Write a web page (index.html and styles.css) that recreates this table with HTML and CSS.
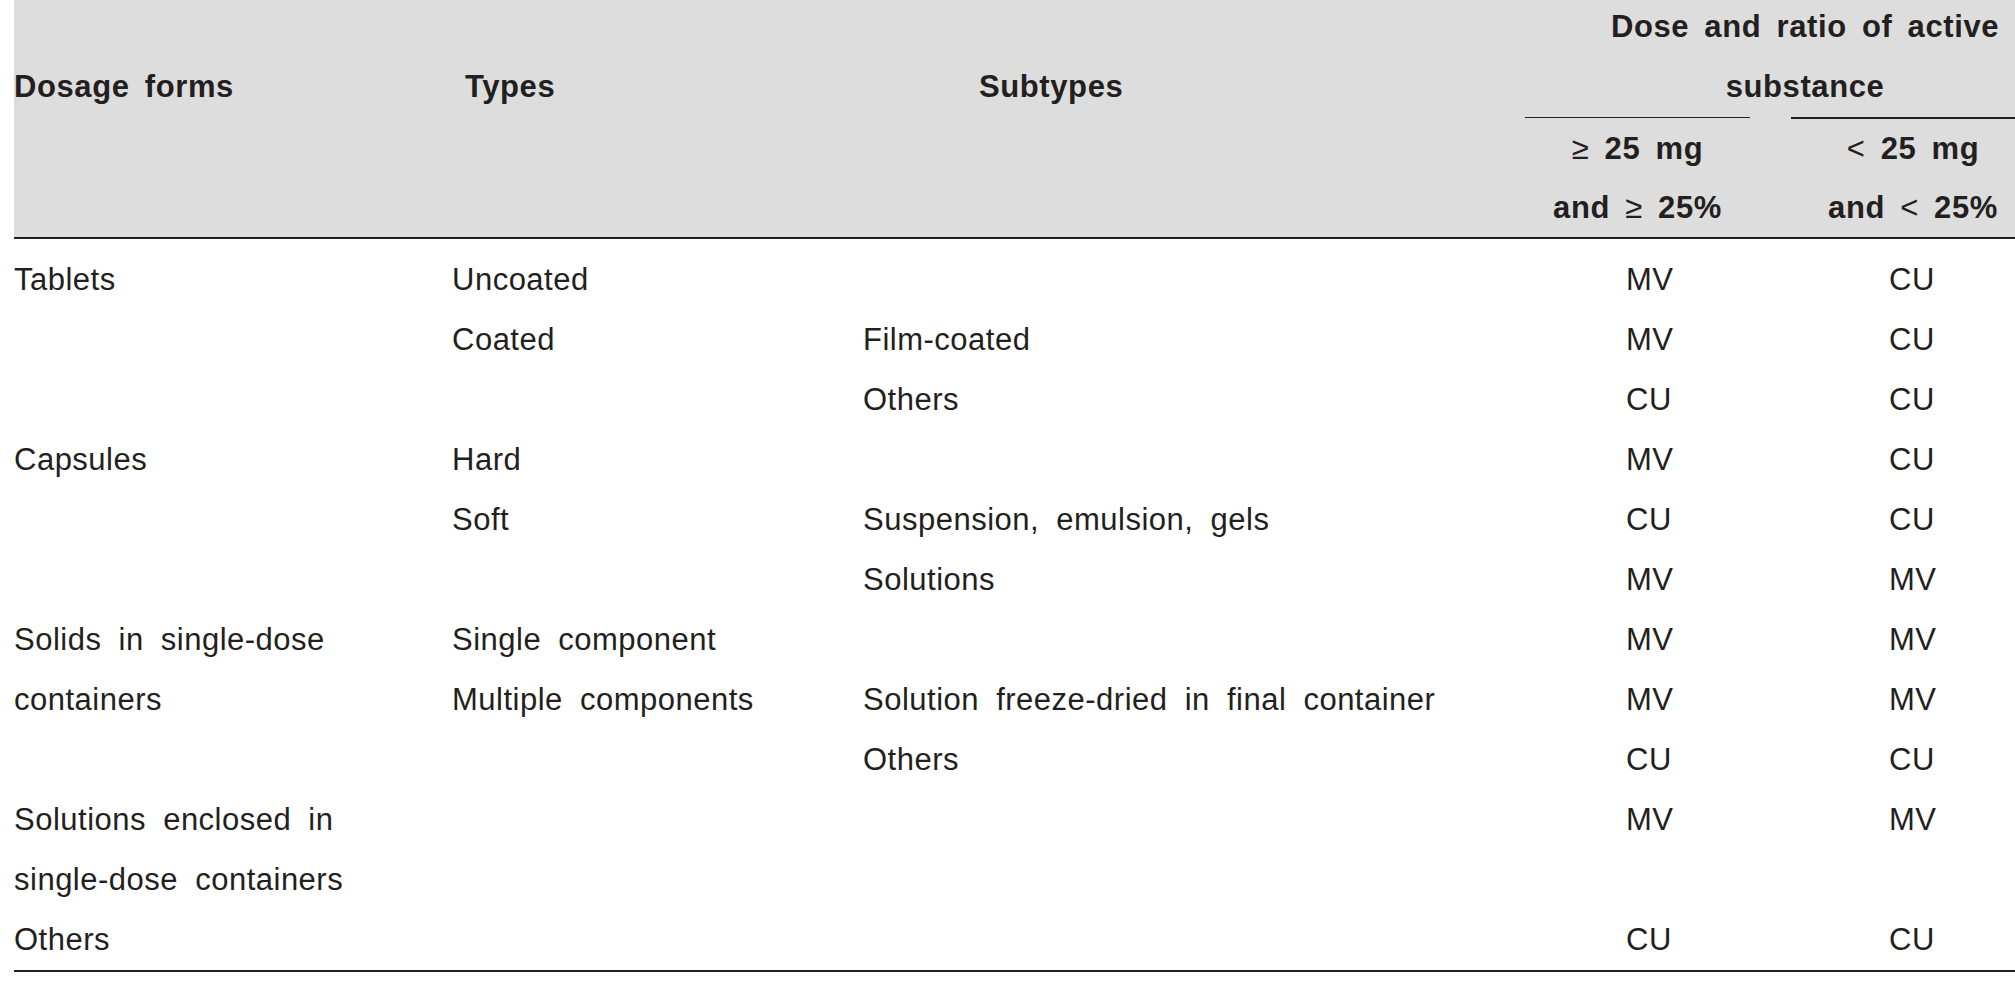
FILE: index.html
```html
<!DOCTYPE html>
<html lang="en">
<head>
<meta charset="utf-8">
<title>Dosage forms</title>
<link rel="stylesheet" href="styles.css">
</head>
<body>
<table class="dose-table">
  <colgroup>
    <col class="c-form">
    <col class="c-type">
    <col class="c-sub">
    <col class="c-hi">
    <col class="c-lo">
  </colgroup>
  <thead>
    <tr class="h1">
      <th colspan="3"></th>
      <th colspan="2" rowspan="2" class="group">Dose and ratio of active<br>substance</th>
    </tr>
    <tr class="h2">
      <th class="h-form">Dosage forms</th>
      <th class="h-type">Types</th>
      <th class="h-sub">Subtypes</th>
    </tr>
    <tr class="h3">
      <th colspan="3"></th>
      <th class="range range-hi"><div class="range-in"><span class="op">&ge;</span> 25 mg<br>and <span class="op">&ge;</span> 25%</div></th>
      <th class="range range-lo"><div class="range-in"><span class="op">&lt;</span> 25 mg<br>and <span class="op">&lt;</span> 25%</div></th>
    </tr>
  </thead>
  <tbody>
    <tr class="first">
      <td>Tablets</td><td>Uncoated</td><td></td><td class="v-hi">MV</td><td class="v-lo">CU</td>
    </tr>
    <tr>
      <td></td><td>Coated</td><td>Film-coated</td><td class="v-hi">MV</td><td class="v-lo">CU</td>
    </tr>
    <tr>
      <td></td><td></td><td>Others</td><td class="v-hi">CU</td><td class="v-lo">CU</td>
    </tr>
    <tr>
      <td>Capsules</td><td>Hard</td><td></td><td class="v-hi">MV</td><td class="v-lo">CU</td>
    </tr>
    <tr>
      <td></td><td>Soft</td><td>Suspension, emulsion, gels</td><td class="v-hi">CU</td><td class="v-lo">CU</td>
    </tr>
    <tr>
      <td></td><td></td><td>Solutions</td><td class="v-hi">MV</td><td class="v-lo">MV</td>
    </tr>
    <tr>
      <td>Solids in single-dose</td><td>Single component</td><td></td><td class="v-hi">MV</td><td class="v-lo">MV</td>
    </tr>
    <tr>
      <td>containers</td><td>Multiple components</td><td>Solution freeze-dried in final container</td><td class="v-hi">MV</td><td class="v-lo">MV</td>
    </tr>
    <tr>
      <td></td><td></td><td>Others</td><td class="v-hi">CU</td><td class="v-lo">CU</td>
    </tr>
    <tr>
      <td>Solutions enclosed in</td><td></td><td></td><td class="v-hi">MV</td><td class="v-lo">MV</td>
    </tr>
    <tr>
      <td>single-dose containers</td><td></td><td></td><td class="v-hi"></td><td class="v-lo"></td>
    </tr>
    <tr class="last">
      <td>Others</td><td></td><td></td><td class="v-hi">CU</td><td class="v-lo">CU</td>
    </tr>
  </tbody>
</table>
</body>
</html>
```

FILE: styles.css
```css
html, body {
  margin: 0;
  padding: 0;
  background: #ffffff;
  overflow: hidden;
}

.dose-table {
  margin: -3px 0 0 14px;
  width: 2001px;
  table-layout: fixed;
  border-collapse: collapse;
  border-spacing: 0;
  font-family: "Liberation Sans", Arial, sans-serif;
  font-size: 31px;
  color: #231f20;
}

.c-form { width: 438px; }
.c-type { width: 411px; }
.c-sub  { width: 662px; }
.c-hi   { width: 245px; }
.c-lo   { width: 245px; }

.dose-table th,
.dose-table td {
  padding: 0;
  text-align: left;
  vertical-align: top;
  line-height: 60px;
  white-space: nowrap;
}

/* header */
.dose-table thead th {
  background: #dddddd;
  font-weight: bold;
  letter-spacing: 0.6px;
  word-spacing: 6px;
}

.dose-table thead tr.h1 th { height: 60px; }
.dose-table thead tr.h2 th { height: 60px; }

.dose-table thead tr.h3 th {
  border-bottom: 2px solid #231f20;
}

.h-type { padding-left: 13px !important; }
.h-sub  { padding-left: 116px !important; }

.group {
  text-align: center !important;
  padding-left: 70px !important;
}

.range-in {
  text-align: center;
  line-height: 59px;
}

.range-hi { padding-right: 20px !important; }
.range-hi .range-in {
  border-top: 1px solid #231f20;
  padding-top: 1px;
}

.range-lo { padding-left: 21px !important; }
.range-lo .range-in {
  border-top: 2px solid #231f20;
  padding-left: 20px;
}

.op { font-weight: normal; }

/* body */
.dose-table tbody td {
  font-weight: normal;
  word-spacing: 8px;
  letter-spacing: 0.5px;
}

.dose-table tbody tr.first td { padding-top: 11px; }

.dose-table tbody tr.last td {
  border-bottom: 2px solid #231f20;
}

.v-hi { padding-left: 101px !important; }
.v-lo { padding-left: 119px !important; }
```
